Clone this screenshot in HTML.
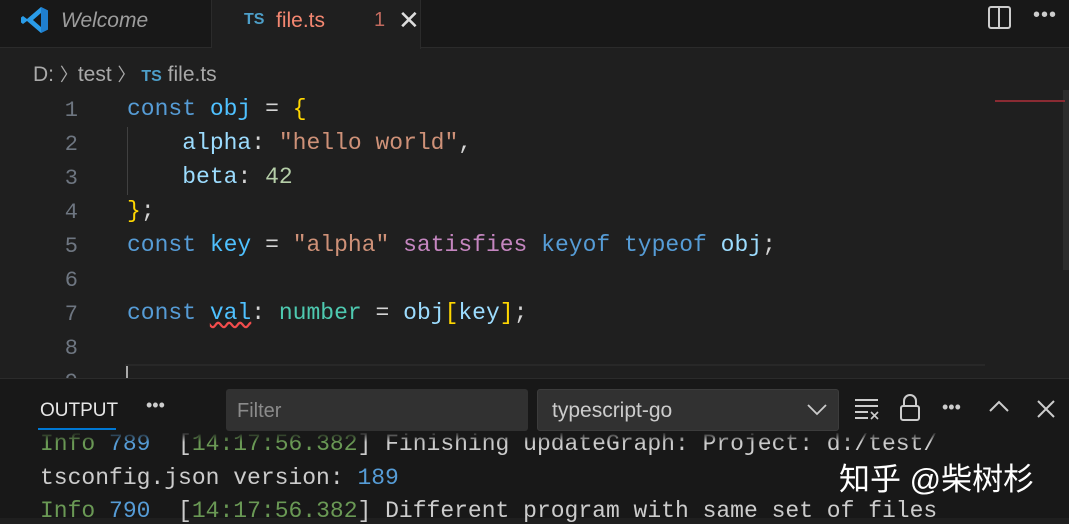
<!DOCTYPE html>
<html><head><meta charset="utf-8"><style>
*{margin:0;padding:0;box-sizing:border-box}
body{width:1069px;height:518px;overflow:hidden;background:#1f1f1f;font-family:"Liberation Sans",sans-serif;position:relative;color:#ccc}
.abs{position:absolute}
.mono{font-family:"Liberation Mono",monospace;font-size:23px;white-space:pre}
.ln{position:absolute;left:40px;width:38px;text-align:right;color:#6e7681;font-family:"Liberation Mono",monospace;font-size:22px}
.code{position:absolute;left:127px}
.k{color:#569cd6}.v{color:#9cdcfe}.s{color:#ce9178}.n{color:#b5cea8}.p{color:#c586c0}.t{color:#4ec9b0}.y{color:#ffd700}.w{color:#d4d4d4}.b{color:#4fc1ff}
</style></head><body>
<div class="abs" style="left:0;top:0;width:1069px;height:48px;background:#181818;border-bottom:1px solid #2b2b2b"></div>
<div class="abs" style="left:0;top:0;width:212px;height:48px;border-right:1px solid #2b2b2b"></div>
<svg class="abs" style="left:20px;top:5px" width="30" height="30" viewBox="0 0 30 30"><path d="M21 2 L28 5.5 V24.5 L21 28 L7 16 L3 19 L1 17.5 V12.5 L3 11 L7 14 Z M21 8 L13 15 L21 22 Z" fill="#2a9ce8"/><path d="M21 2 L28 5.5 V24.5 L21 28Z" fill="#1f7fd0"/></svg>
<div class="abs" style="left:61px;top:9px;font-size:21px;font-style:italic;color:#9d9d9d">Welcome</div>
<div class="abs" style="left:212px;top:0;width:209px;height:49px;background:#1f1f1f;border-right:1px solid #2b2b2b"></div>
<div class="abs" style="left:244px;top:11px;font-size:16px;font-weight:bold;color:#4d9fc9">TS</div>
<div class="abs" style="left:276px;top:9px;font-size:21px;color:#f48771">file.ts</div>
<div class="abs" style="left:374px;top:9px;font-size:20px;color:#c26a5e">1</div>
<div class="abs" style="left:398px;top:5px;font-size:26px;color:#ddd">✕</div>
<div class="abs" style="left:988px;top:6px;width:23px;height:23px;border:2px solid #ccc;border-radius:3px"></div>
<div class="abs" style="left:998px;top:7px;width:2px;height:21px;background:#ccc"></div>
<div class="abs" style="left:1033px;top:4px;font-size:20px;color:#ccc;letter-spacing:1px">•••</div>
<div class="abs" style="left:33px;top:61px;font-size:21px;color:#a9a9a9">D: <span style="font-size:18px">〉</span>test <span style="font-size:18px">〉</span> <b style="font-size:16px;color:#4d9fc9">TS</b> file.ts</div>

<div class="ln" style="top:98px">1</div><div class="ln" style="top:132px">2</div><div class="ln" style="top:166px">3</div><div class="ln" style="top:200px">4</div><div class="ln" style="top:234px">5</div><div class="ln" style="top:268px">6</div><div class="ln" style="top:302px">7</div><div class="ln" style="top:336px">8</div><div class="ln" style="top:370px">9</div>
<div class="abs" style="left:127px;top:127px;width:1px;height:68px;background:#404040"></div>
<div class="mono">
<div class="code" style="top:96px"><span class="k">const</span> <span class="b">obj</span> <span class="w">=</span> <span class="y">{</span></div>
<div class="code" style="top:130px">    <span class="v">alpha</span><span class="w">:</span> <span class="s">"hello world"</span><span class="w">,</span></div>
<div class="code" style="top:164px">    <span class="v">beta</span><span class="w">:</span> <span class="n">42</span></div>
<div class="code" style="top:198px"><span class="y">}</span><span class="w">;</span></div>
<div class="code" style="top:232px"><span class="k">const</span> <span class="b">key</span> <span class="w">=</span> <span class="s">"alpha"</span> <span class="p">satisfies</span> <span class="k">keyof</span> <span class="k">typeof</span> <span class="v">obj</span><span class="w">;</span></div>
<div class="code" style="top:300px"><span class="k">const</span> <span class="b" style="text-decoration:underline wavy #f14c4c">val</span><span class="w">:</span> <span class="t">number</span> <span class="w">=</span> <span class="v">obj</span><span class="y">[</span><span class="v">key</span><span class="y">]</span><span class="w">;</span></div>
</div>
<div class="abs" style="left:125px;top:364px;width:860px;height:14px;border-top:2px solid #282828"></div>
<div class="abs" style="left:126px;top:366px;width:2px;height:12px;background:#aaa"></div>
<div class="abs" style="left:1063px;top:90px;width:6px;height:180px;background:#2c2c2c"></div>
<div class="abs" style="left:995px;top:100px;width:70px;height:2px;background:#8a2b33"></div>

<div class="abs" style="left:0;top:378px;width:1069px;height:140px;background:#181818;border-top:1px solid #2b2b2b"></div>
<div class="abs" style="left:40px;top:400px;font-size:19px;color:#e7e7e7">OUTPUT</div>
<div class="abs" style="left:38px;top:428px;width:78px;height:2px;background:#0078d4"></div>
<div class="abs" style="left:146px;top:395px;font-size:18px;color:#ccc">•••</div>
<div class="abs" style="left:226px;top:389px;width:302px;height:42px;background:#313131;border-radius:3px"></div>
<div class="abs" style="left:237px;top:400px;font-size:20px;color:#8b8b8b">Filter</div>
<div class="abs" style="left:537px;top:389px;width:302px;height:42px;background:#313131;border-radius:3px;border:1px solid #3c3c3c"></div>
<div class="abs" style="left:552px;top:399px;font-size:21px;color:#ccc">typescript-go</div>
<svg class="abs" style="left:806px;top:402px" width="22" height="16"><path d="M2 3 L11 12 L20 3" stroke="#ccc" stroke-width="1.8" fill="none"/></svg>
<svg class="abs" style="left:854px;top:397px" width="28" height="26"><path d="M1 3H24M1 9H24M1 15H14M1 21H14" stroke="#ccc" stroke-width="2"/><path d="M17 15L24 22M24 15L17 22" stroke="#ccc" stroke-width="1.6"/></svg>
<svg class="abs" style="left:898px;top:393px" width="24" height="30"><path d="M6 13V8a6 6 0 0 1 12 0v5" stroke="#ccc" stroke-width="2" fill="none"/><rect x="3" y="13" width="18" height="14" rx="2" stroke="#ccc" stroke-width="2" fill="none"/></svg>
<div class="abs" style="left:942px;top:397px;font-size:18px;color:#ccc">•••</div>
<svg class="abs" style="left:987px;top:398px" width="24" height="16"><path d="M3 13L12 4L21 13" stroke="#ccc" stroke-width="2" fill="none"/></svg>
<svg class="abs" style="left:1035px;top:398px" width="22" height="22"><path d="M3 3L19 19M19 3L3 19" stroke="#ccc" stroke-width="2"/></svg>
<div class="mono" style="position:absolute;left:0;top:0;color:#ccc">
<div class="abs" style="left:40px;top:431px"><span style="color:#6a9955">Info</span> <span class="k">789</span>  [<span style="color:#6a9955">14:17:56.382</span>] Finishing updateGraph: Project: d:/test/</div>
<div class="abs" style="left:40px;top:465px">tsconfig.json version: <span class="k">189</span></div>
<div class="abs" style="left:40px;top:498px"><span style="color:#6a9955">Info</span> <span class="k">790</span>  [<span style="color:#6a9955">14:17:56.382</span>] Different program with same set of files</div>
</div>
<div class="abs" style="left:839px;top:454px;font-family:'Liberation Sans','Noto Sans CJK SC',sans-serif;font-size:31px;color:#fff">知乎 @柴树杉</div>
<div class="abs" style="left:0;top:432px;width:1069px;height:10px;background:linear-gradient(#181818,rgba(24,24,24,0))"></div>
</body></html>
